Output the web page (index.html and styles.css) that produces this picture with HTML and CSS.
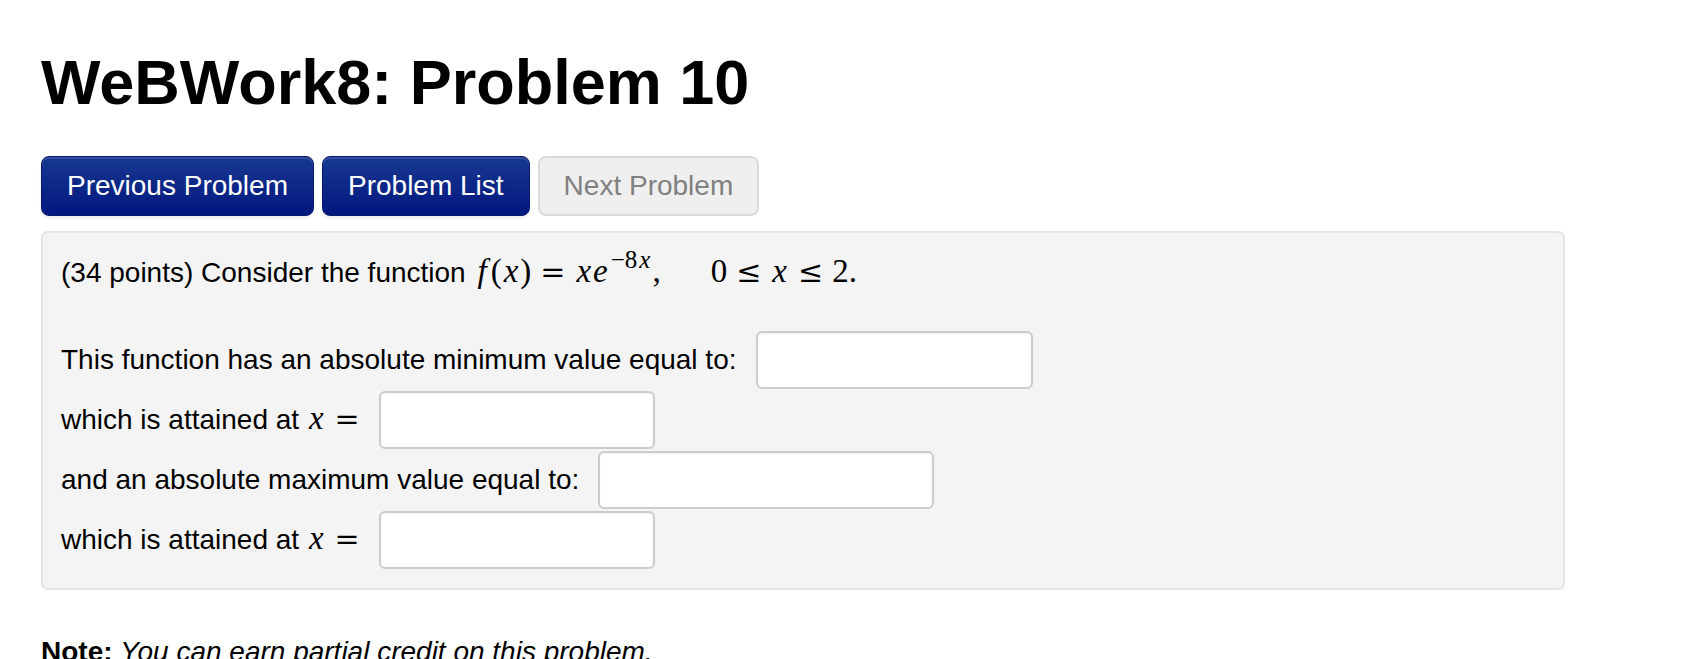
FILE: index.html
```html
<!DOCTYPE html>
<html lang="en">
<head>
<meta charset="utf-8">
<title>WeBWork8: Problem 10</title>
<link rel="stylesheet" href="styles.css">
</head>
<body>
<div class="page">
  <h1 class="title">WeBWork8: Problem 10</h1>
  <nav class="nav-buttons">
    <a class="btn btn-primary" href="#">Previous Problem</a>
    <a class="btn btn-primary" href="#">Problem List</a>
    <span class="btn btn-disabled">Next Problem</span>
  </nav>
  <div class="problem">
    <p class="intro">(34 points) Consider the function <span class="math"><i class="mf">f</i>(<i class="mx">x</i>)<span class="rel">=</span><i class="mx">x</i><i>e</i><sup class="sup">−8<i class="mx">x</i></sup>,<span class="quad"></span>0<span class="rel">≤</span><i class="mx">x</i><span class="rel">≤</span>2.</span></p>
    <div class="rows">
      <div class="row"><span class="label">This function has an absolute minimum value equal to:</span><input class="ans ans-a" type="text"></div>
      <div class="row"><span class="label">which is attained at <span class="math"><i class="mx">x</i><span class="rel rel-end">=</span></span></span><input class="ans ans-b" type="text"></div>
      <div class="row"><span class="label">and an absolute maximum value equal to:</span><input class="ans ans-c" type="text"></div>
      <div class="row"><span class="label">which is attained at <span class="math"><i class="mx">x</i><span class="rel rel-end">=</span></span></span><input class="ans ans-b" type="text"></div>
    </div>
  </div>
  <p class="note"><b>Note:</b> <i>You can earn partial credit on this problem.</i></p>
</div>
</body>
</html>
```
FILE: styles.css
```css
html, body {
  margin: 0;
  padding: 0;
  background: #ffffff;
}
body {
  font-family: "Liberation Sans", Arial, Helvetica, sans-serif;
  font-size: 28px;
  line-height: 40px;
  color: #000000;
}
.page {
  padding-left: 41px;
}
.title {
  margin: 47px 0 0 0;
  font-size: 63px;
  line-height: 70px;
  font-weight: bold;
  color: #000;
}
.nav-buttons {
  display: flex;
  gap: 8px;
  margin-top: 39px;
}
.btn {
  box-sizing: border-box;
  display: flex;
  align-items: center;
  height: 60px;
  padding: 0 25px;
  border-radius: 8px;
  font-size: 28px;
  text-decoration: none;
}
.btn-primary {
  color: #ffffff;
  background: linear-gradient(#173890, #02177f);
  border: 1px solid #06196d;
  box-shadow: inset 0 2px 0 rgba(255,255,255,0.12), 0 2px 3px rgba(0,0,0,0.08);
}
.btn-disabled {
  color: #808080;
  background: #efefef;
  border: 2px solid #dadada;
  padding: 0 24px;
}
.problem {
  box-sizing: border-box;
  width: 1524px;
  margin-top: 15px;
  padding: 20px 18px 19px 18px;
  background: #f4f4f4;
  border: 2px solid #e4e4e4;
  border-radius: 7px;
}
.intro {
  margin: 0 0 38px 0;
}
.math {
  font-family: "Liberation Serif", "Times New Roman", serif;
  font-size: 33px;
  line-height: 0;
}
.math i {
  font-style: italic;
}
.mf {
  margin-left: 4px;
  margin-right: 4px;
}
.mx {
  margin: 0 2px;
}
.rel {
  font-family: "DejaVu Serif", "Liberation Serif", serif;
  font-size: 30px;
  margin: 0 9px;
}
.rel-end {
  margin-right: 0;
}
.quad {
  display: inline-block;
  width: 50px;
}
.sup {
  font-size: 25px;
  vertical-align: 14px;
  line-height: 0;
  margin-left: 3px;
}
.rows {
  display: flex;
  flex-direction: column;
  gap: 2px;
}
.row {
  display: flex;
  align-items: center;
  height: 58px;
}
.label {
  white-space: nowrap;
}
.ans {
  box-sizing: border-box;
  height: 58px;
  margin: 0 0 0 19px;
  padding: 0 12px;
  background: #ffffff;
  border: 2px solid #cccccc;
  border-radius: 6px;
  font-size: 28px;
  font-family: "Liberation Sans", Arial, sans-serif;
  box-shadow: inset 0 1px 2px rgba(0,0,0,0.06);
}
.ans-a { width: 277px; }
.ans-b { width: 276px; }
.ans-c { width: 336px; }
.note {
  margin: 42px 0 0 0;
}
.note i {
  font-style: italic;
}
```
